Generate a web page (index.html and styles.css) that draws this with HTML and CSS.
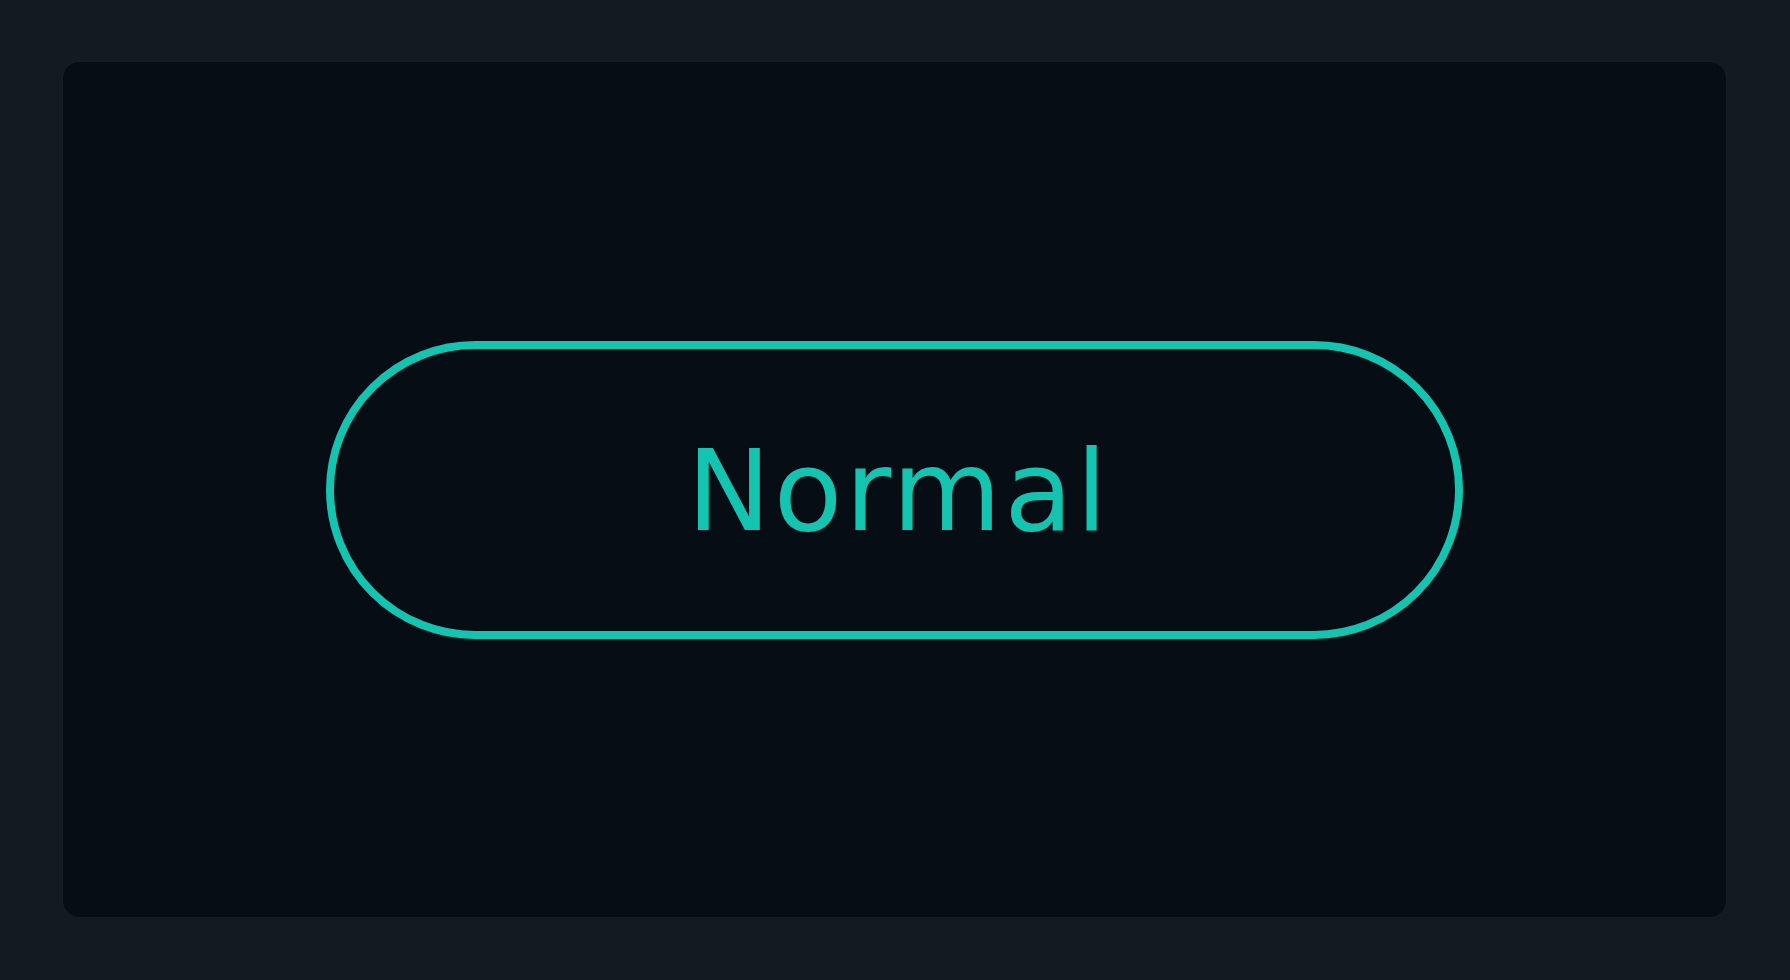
FILE: index.html
```html
<!DOCTYPE html>
<html lang="en">
<head>
  <meta charset="UTF-8">
  <meta name="viewport" content="width=device-width, initial-scale=1.0">
  <title>Normal</title>
  <link rel="stylesheet" href="styles.css">
</head>
<body>
  <div class="card">
    <button class="pill">Normal</button>
  </div>
</body>
</html>
```

FILE: styles.css
```css
html, body {
  height: 100%;
}

body {
  box-sizing: border-box;
  display: flex;
  margin: 0;
  padding: 62px 64px 63px 63px;
  background-color: #141a22;
  font-family: "DejaVu Sans", "Open Sans", sans-serif;
}

.card {
  flex: 1;
  display: flex;
  justify-content: center;
  align-items: center;
  background-color: #060d14;
  border-radius: 16px;
  box-shadow: 0 0 2px rgba(255, 255, 255, 0.06);
}

.pill {
  box-sizing: border-box;
  width: 1137px;
  height: 298px;
  display: flex;
  justify-content: center;
  align-items: center;
  background: transparent;
  border: 8px solid #13c4b0;
  border-radius: 149px;
  color: #13c4b0;
  font-family: inherit;
  font-size: 112px;
  font-weight: 400;
  letter-spacing: 3px;
  padding: 3px 0 0 8px;
  cursor: pointer;
}
```
